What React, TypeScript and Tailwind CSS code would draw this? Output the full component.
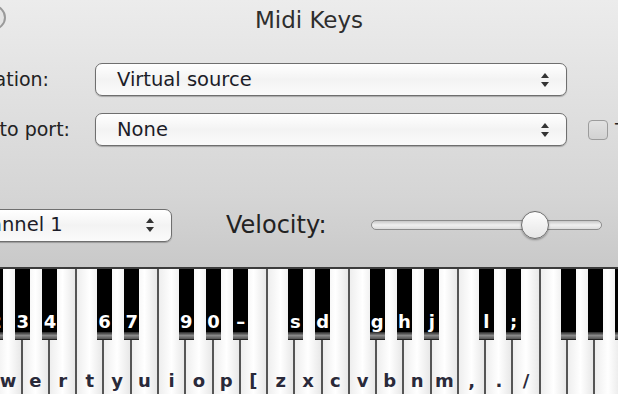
import { useState } from "react";

const WHITE_W = 27.27;

// white keys from "q" (partly off the left edge) to three blank keys on the right
const whiteKeys = ["q", "w", "e", "r", "t", "y", "u", "i", "o", "p", "[", "z", "x", "c", "v", "b", "n", "m", ",", ".", "/", "", "", ""];

// black keys sit on the boundary after white key `after`
const blackKeys = [
  { after: 0, label: "2" },
  { after: 1, label: "3" },
  { after: 2, label: "4" },
  { after: 4, label: "6" },
  { after: 5, label: "7" },
  { after: 7, label: "9" },
  { after: 8, label: "0" },
  { after: 9, label: "–" },
  { after: 11, label: "s" },
  { after: 12, label: "d" },
  { after: 14, label: "g" },
  { after: 15, label: "h" },
  { after: 16, label: "j" },
  { after: 18, label: "l" },
  { after: 19, label: ";" },
  { after: 21, label: "" },
  { after: 22, label: "" },
  { after: 23, label: "" },
];

function PopupArrows() {
  return (
    <svg width="10" height="16" viewBox="0 0 10 16" className="shrink-0">
      <path d="M5 1 L9 6 L1 6 Z" fill="#333" />
      <path d="M5 15 L9 10 L1 10 Z" fill="#333" />
    </svg>
  );
}

function Popup({ text, className }: { text: string; className: string }) {
  return (
    <div
      className={`h-[33px] shrink-0 flex items-center justify-between pl-[21px] pr-[16px] rounded-[7px] border border-[#6f6f6f] bg-gradient-to-b from-white via-[#f3f3f3] to-[#fbfbfb] shadow-[0_1px_1px_rgba(0,0,0,0.25)] ${className}`}
    >
      <span className="text-[19.5px] text-[#1c1c28] whitespace-nowrap leading-none">{text}</span>
      <PopupArrows />
    </div>
  );
}

function Keyboard() {
  const [down, setDown] = useState<string | null>(null);
  return (
    <div className="relative h-[130px] border-t-2 border-[#3c3c3c] bg-[#444] overflow-hidden">
      <div className="flex h-full -ml-[31.85px]">
        {whiteKeys.map((k, i) => (
          <div
            key={i}
            onMouseDown={() => setDown("w" + i)}
            onMouseUp={() => setDown(null)}
            className={`w-[27.27px] shrink-0 h-full flex flex-col justify-end items-center pb-[6px] border-r-2 border-[#555] ${
              down === "w" + i ? "bg-[#dcdcdc]" : "bg-gradient-to-r from-[#eeeeee] via-white to-[#e8e8e8]"
            }`}
          >
            <span className="text-[18px] font-bold leading-[20px] text-[#2a2a3a]">{k}</span>
          </div>
        ))}
      </div>
      {blackKeys.map((b) => (
        <div
          key={b.after}
          className="absolute top-0 w-[15px] h-[71px] flex flex-col items-center bg-black"
          style={{ left: -31.85 + (b.after + 1) * WHITE_W - 7.5 }}
        >
          <span className="pt-[43px] text-[18px] font-bold leading-[20px] text-white">{b.label}</span>
          <div className="mt-auto w-full h-[8px] bg-gradient-to-b from-[#2a2a2a] via-[#8a8a8a] to-[#555] border-b border-[#222]" />
        </div>
      ))}
    </div>
  );
}

export default function App() {
  return (
    <div className="w-[618px] h-[394px] overflow-hidden font-['DejaVu_Sans',sans-serif] bg-gradient-to-b from-[#ececec] via-[#d5d5d5] to-[#b3b3b3]">
      {/* title bar */}
      <div className="relative h-[40px] flex items-center justify-center">
        <div className="absolute left-[-19px] top-[5px] w-[25px] h-[25px] rounded-full border-2 border-[#9a9a9a] bg-[#e4e4e4]" />
        <span className="text-[23px] text-[#2e2e2e] leading-none">Midi Keys</span>
      </div>

      <div className="pt-[23px]">
        <div className="flex items-center">
          <div className="w-[95px] shrink-0 overflow-hidden flex justify-end pr-[46px]">
            <span className="text-[19px] text-[#222] whitespace-nowrap">Destination:</span>
          </div>
          <Popup text="Virtual source" className="w-[472px]" />
        </div>

        <div className="flex items-center mt-[17px]">
          <div className="w-[95px] shrink-0 overflow-hidden flex justify-end pr-[25px]">
            <span className="text-[19px] text-[#222] whitespace-nowrap">Send to port:</span>
          </div>
          <Popup text="None" className="w-[472px]" />
          <div className="ml-[21px] shrink-0 w-[20px] h-[20px] rounded-[4px] border border-[#9c9c9c] bg-gradient-to-b from-[#e2e2e2] to-[#d2d2d2]" />
          <span className="ml-[7px] text-[18px] text-[#222] whitespace-nowrap">Thru</span>
        </div>

        <div className="flex items-center mt-[61px]">
          <Popup text="Channel 1" className="w-[230px] -ml-[58px]" />
          <span className="ml-[54px] text-[24px] text-[#222] whitespace-nowrap">Velocity:</span>
          <div className="relative ml-[44px] w-[231px] h-[10px] rounded-full border border-[#8c8c8c] bg-gradient-to-b from-[#c8c8c8] via-[#f0f0f0] to-[#dcdcdc] shrink-0">
            <div className="absolute left-[149px] top-[-10px] w-[28px] h-[28px] rounded-full border border-[#6c6c6c] bg-gradient-to-b from-[#fdfdfd] to-[#e6e6e6] shadow-[0_1px_2px_rgba(0,0,0,0.35)]" />
          </div>
        </div>

        <div className="mt-[24px]">
          <Keyboard />
        </div>
      </div>
    </div>
  );
}
